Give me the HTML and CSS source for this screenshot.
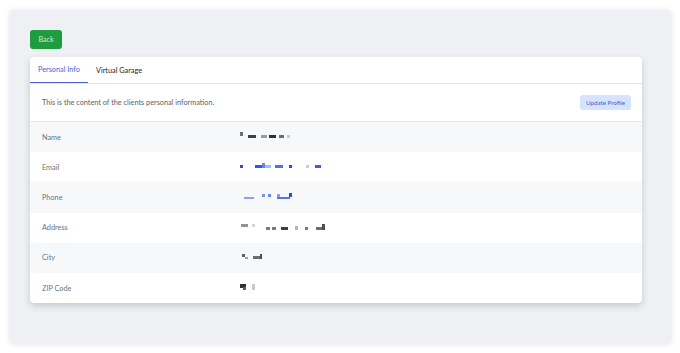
FILE: index.html
```html
<!DOCTYPE html>
<html>
<head>
<meta charset="utf-8">
<link rel="stylesheet" href="styles.css">
</head>
<body>
<div class="panel">
  <button class="btn-back">Back</button>
  <div class="card">
    <div class="tabs">
      <div class="tab active">Personal Info</div>
      <div class="tab">Virtual Garage</div>
    </div>
    <div class="desc">
      <span>This is the content of the clients personal information.</span>
      <button class="btn-update">Update Profile</button>
    </div>
    <div class="row alt">
      <div class="label">Name</div>
      <svg class="val" width="80" height="12" viewBox="0 0 80 12"><rect x="0" y="1" width="3" height="4" fill="#6b6e78"/><rect x="8" y="4" width="8" height="3" fill="#3d404a"/><rect x="21" y="4" width="6" height="3" fill="#9a9ca4"/><rect x="29" y="4" width="7" height="3" fill="#2d3038"/><rect x="39" y="4" width="5" height="3" fill="#6a6d76"/><rect x="47" y="4" width="3" height="3" fill="#c8cad0"/></svg>
    </div>
    <div class="row">
      <div class="label">Email</div>
      <svg class="val" width="90" height="12" viewBox="0 0 90 12"><rect x="0" y="4" width="3" height="3" fill="#2a4de0"/><rect x="15" y="4" width="7" height="3" fill="#3458e2"/><rect x="22" y="2" width="3" height="5" fill="#6b84ea"/><rect x="25" y="4" width="6" height="3" fill="#a8b8f2"/><rect x="35" y="4" width="8" height="3" fill="#5470e6"/><rect x="49" y="4" width="3" height="3" fill="#2a4de0"/><rect x="66" y="4" width="3" height="3" fill="#c3cef6"/><rect x="75" y="4" width="6" height="3" fill="#3a5ce3"/></svg>
    </div>
    <div class="row alt">
      <div class="label">Phone</div>
      <svg class="val" width="90" height="12" viewBox="0 0 90 12"><rect x="4" y="6" width="10" height="2" fill="#8ea1ee"/><rect x="22" y="3" width="3" height="3" fill="#8097ec"/><rect x="28" y="3" width="3" height="3" fill="#6b84ea"/><rect x="37" y="3" width="3" height="3" fill="#8ea1ee"/><rect x="37" y="6" width="13" height="2" fill="#5a74e6"/><rect x="49" y="2" width="3" height="4" fill="#2a4de0"/></svg>
    </div>
    <div class="row">
      <div class="label">Address</div>
      <svg class="val" width="95" height="12" viewBox="0 0 95 12"><rect x="1" y="2" width="7" height="3" fill="#8f929a"/><rect x="12" y="2" width="3" height="3" fill="#d6d8dd"/><rect x="26" y="5" width="4" height="3" fill="#777a83"/><rect x="32" y="5" width="4" height="3" fill="#777a83"/><rect x="41" y="5" width="7" height="3" fill="#3d404a"/><rect x="55" y="4" width="3" height="4" fill="#b4b6bd"/><rect x="65" y="5" width="3" height="3" fill="#777a83"/><rect x="76" y="5" width="6" height="3" fill="#6a6d76"/><rect x="82" y="2" width="3" height="6" fill="#4b4e57"/></svg>
    </div>
    <div class="row alt">
      <div class="label">City</div>
      <svg class="val" width="40" height="12" viewBox="0 0 40 12"><rect x="2" y="2" width="3" height="3" fill="#5c5f68"/><rect x="5" y="5" width="3" height="2" fill="#9c9ea5"/><rect x="13" y="4" width="7" height="3" fill="#6a6d76"/><rect x="20" y="2" width="2" height="5" fill="#4b4e57"/></svg>
    </div>
    <div class="row">
      <div class="label">ZIP Code</div>
      <svg class="val" width="40" height="12" viewBox="0 0 40 12"><rect x="0" y="2" width="6" height="4" fill="#2d3038"/><rect x="3" y="5" width="3" height="3" fill="#5c5f68"/><rect x="12" y="2" width="3" height="6" fill="#c8cad0"/></svg>
    </div>
  </div>
</div>
</body>
</html>
```
FILE: styles.css
```css
* { box-sizing: border-box; }
html, body { margin: 0; padding: 0; background: #ffffff; }
body {
  font-family: "Lato", "Noto Sans", sans-serif;
  width: 680px;
  height: 353px;
  overflow: hidden;
}
.panel {
  margin: 10px 0 0 10px;
  width: 661px;
  height: 333px;
  background: #eff0f3;
  border-radius: 3px;
  box-shadow: 0 1px 6px rgba(0,0,0,0.12);
  padding: 20px 29px 20px 20px;
  display: flex;
  flex-direction: column;
  align-items: flex-start;
}
.btn-back {
  height: 19px;
  width: 32px;
  padding: 0;
  border: none;
  border-radius: 3px;
  background: #1e9c3e;
  color: #cfe9d4;
  font-family: inherit;
  font-size: 7.2px;
  margin-bottom: 8px;
}
.card {
  width: 612px;
  background: #ffffff;
  border-radius: 4px;
  box-shadow: 0 3px 7px rgba(0,0,0,0.16);
  overflow: hidden;
}
.tabs {
  height: 27px;
  display: flex;
  border-bottom: 1px solid #e6e7ea;
}
.tab {
  padding: 0 8px;
  display: flex;
  align-items: center;
  font-size: 7.3px;
  color: #1f2229;
}
.tab.active {
  width: 58px;
  color: #4b5fd6;
  border-bottom: 1.5px solid #4b5fd6;
}
.desc {
  height: 38px;
  display: flex;
  align-items: center;
  justify-content: space-between;
  padding: 0 11px 0 12px;
  border-bottom: 1px solid #e6e7ea;
  font-size: 7.3px;
  color: #5d616b;
}
.btn-update {
  height: 15px;
  width: 51px;
  padding: 0;
  border: none;
  border-radius: 3px;
  background: #d5e3fd;
  color: #4c5bd0;
  font-family: inherit;
  font-size: 6.2px;
}
.row {
  height: 30.2px;
  display: flex;
  align-items: center;
  padding-left: 12px;
  font-size: 7.3px;
  color: #6e727b;
}
.row.alt { background: #f7f8fa; }
.label { width: 198px; }
.val { display: block; }
```
